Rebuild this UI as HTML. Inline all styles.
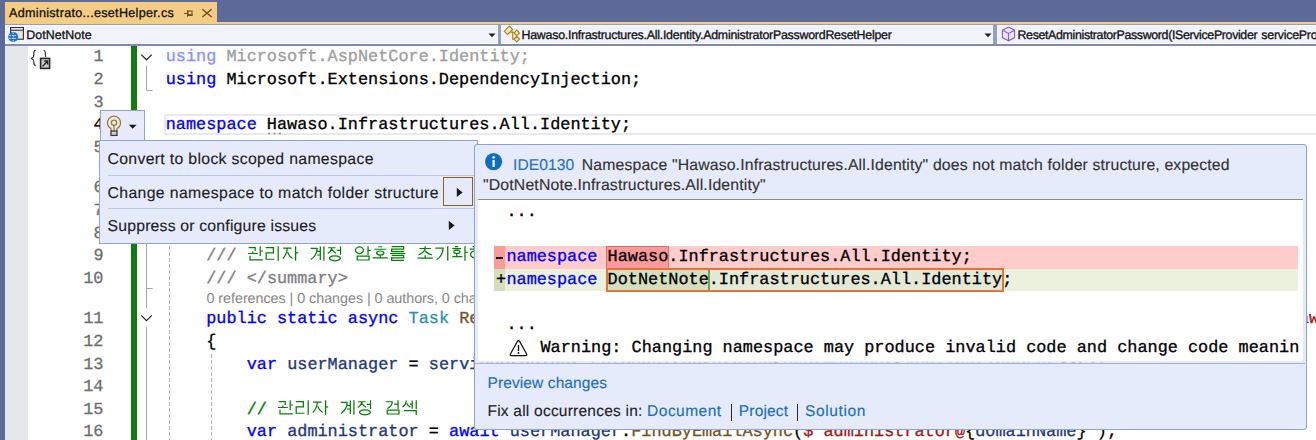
<!DOCTYPE html>
<html><head><meta charset="utf-8"><style>
*{margin:0;padding:0;box-sizing:border-box}
html,body{width:1316px;height:440px;overflow:hidden;background:#5d6b99;position:relative;text-rendering:geometricPrecision}
.a{position:absolute}
.m{position:absolute;font-family:"Liberation Mono",monospace;font-size:16.864px;line-height:normal;white-space:pre;-webkit-text-stroke:0.3px currentColor}
.s{position:absolute;font-family:"Liberation Sans",sans-serif;line-height:normal;white-space:pre;-webkit-text-stroke:0.15px currentColor}
.ko{position:absolute;overflow:visible}
</style></head><body>
<div class="a" style="left:5px;top:2px;width:212px;height:22px;background:#f5cc84"></div>
<div class="a" style="left:5px;top:22px;width:1311px;height:2px;background:#f5cc84"></div>
<div class="s" style="left:9.00px;top:6.20px;font-size:12.6px;color:#111111;letter-spacing:0.296px;-webkit-text-stroke:0.3px #111">Administrato...esetHelper.cs</div>
<svg class="a" style="left:182px;top:8px" width="14" height="12" viewBox="0 0 14 12"><g fill="none" stroke="#6b4a1e" stroke-width="1"><path d="M2 5.4H5.6 M5.6 2.2V8.8"/><rect x="6" y="3" width="4" height="4.4"/></g><rect x="5.6" y="6.2" width="4.9" height="1.6" fill="#6b4a1e"/></svg>
<svg class="a" style="left:201px;top:8px" width="12" height="10" viewBox="0 0 12 10"><path d="M1.4 1.2L10.6 9 M10.6 1.2L1.4 9" stroke="#6b4a1e" stroke-width="1.3" fill="none"/></svg>
<div class="a" style="left:5px;top:24px;width:1311px;height:22px;background:#909fcb"></div>
<div class="a" style="left:5px;top:24px;width:1311px;height:1px;background:#98a0b6"></div>
<div class="a" style="left:5px;top:44px;width:1311px;height:2px;background:#808cab"></div>
<div class="a" style="left:5px;top:25px;width:493px;height:19px;background:#f0f3fb;border:1px solid #f6f8fd;border-bottom-color:#fafbfe"></div>
<div class="a" style="left:501px;top:25px;width:492px;height:19px;background:#f0f3fb;border:1px solid #f6f8fd;border-bottom-color:#fafbfe"></div>
<div class="a" style="left:997px;top:25px;width:330px;height:19px;background:#f0f3fb;border:1px solid #f6f8fd;border-bottom-color:#fafbfe"></div>
<svg class="a" style="left:488px;top:33px" width="8" height="5"><path d="M0.5 0.5H7.5L4 4.2Z" fill="#1e1e1e"/></svg>
<svg class="a" style="left:984px;top:33px" width="8" height="5"><path d="M0.5 0.5H7.5L4 4.2Z" fill="#1e1e1e"/></svg>
<svg class="a" style="left:8px;top:26px" width="18" height="17" viewBox="0 0 18 17"><rect x="2.6" y="1.6" width="12.8" height="11.6" fill="#e4e6ec" stroke="#2d2d2d" stroke-width="1.1"/><rect x="2.6" y="1.6" width="12.8" height="2.6" fill="#fff" stroke="#2d2d2d" stroke-width="1.1"/><circle cx="5.2" cy="11" r="5" fill="#1e72c8"/><path d="M1.2 9.6H9.2 M1.2 12.4H9.2 M5.2 6.4V15.6" stroke="#fff" stroke-width="0.9" stroke-dasharray="1.4 1.2"/></svg>
<div class="s" style="left:26.20px;top:27.78px;font-size:12.4px;color:#111111;letter-spacing:0.089px;-webkit-text-stroke:0.3px #111">DotNetNote</div>
<svg class="a" style="left:503px;top:25px" width="19" height="19" viewBox="0 0 19 19"><path d="M7.2 7.2H11 M9.7 7.2V14.1H11" stroke="#b8860b" stroke-width="1.2" fill="none"/><g fill="#e6e4de" stroke="#b8860b" stroke-width="1.2" stroke-linejoin="miter"><path d="M1.2 6.3L6.3 1.2 9.7 4.4 4.6 9.5Z"/><path d="M13.8 5.2L16.5 7.9 13.8 10.6 11.1 7.9Z"/><path d="M13.8 11.4L16.5 14.1 13.8 16.8 11.1 14.1Z"/></g></svg>
<div class="s" style="left:521.50px;top:27.78px;font-size:12.4px;color:#111111;letter-spacing:-0.246px;-webkit-text-stroke:0.3px #111">Hawaso.Infrastructures.All.Identity.AdministratorPasswordResetHelper</div>
<svg class="a" style="left:1001px;top:26px" width="15" height="16" viewBox="0 0 15 16"><path d="M7.5 1L13.6 4.2V11.6L7.5 14.8 1.4 11.6V4.2Z" fill="#e9e4f3" stroke="#8e5fc0" stroke-width="1.1"/><path d="M1.4 4.2L7.5 7.4 13.6 4.2 M7.5 7.4V14.8" fill="none" stroke="#8e5fc0" stroke-width="1.1"/></svg>
<div class="s" style="left:1017.50px;top:27.78px;font-size:12.4px;color:#111111;letter-spacing:-0.35px;-webkit-text-stroke:0.3px #111">ResetAdministratorPassword(IServiceProvider</div>
<div class="s" style="left:1261.30px;top:27.78px;font-size:12.4px;color:#111111;letter-spacing:-0.246px;-webkit-text-stroke:0.3px #111">serviceProvider, string domainName)</div>
<div class="a" style="left:5px;top:46px;width:1311px;height:394px;background:#ffffff"></div>
<div class="a" style="left:5px;top:46px;width:23px;height:394px;background:#e6e7e9"></div>
<div class="a" style="left:164px;top:114px;width:1160px;height:21px;border:2px solid #e8e8ef;border-right:none"></div>
<div class="a" style="left:131px;top:46px;width:6px;height:394px;background:#107c10"></div>
<svg class="a" style="left:29px;top:48px" width="24" height="24" viewBox="0 0 24 24"><path d="M6.6 2.2C4.6 2.4 4.8 4 4.8 6.2S4.6 9.6 2.8 10 4.8 11 4.8 13.4 4.6 17.2 6.6 17.6" fill="none" stroke="#2b2b2b" stroke-width="1.1"/><path d="M14.6 2.2C16.4 2.4 16.4 4 16.4 6.2S16.8 8.6 17 9" fill="none" stroke="#2b2b2b" stroke-width="1.1"/><rect x="11.6" y="10.4" width="9" height="10" fill="#c9c9c9" stroke="#262626" stroke-width="1.6"/><path d="M13.6 18.4L18.4 13.2 M15.2 13H18.6V16.4" fill="none" stroke="#262626" stroke-width="1.4"/></svg>
<div class="m" style="left:93.38px;top:48.45px"><span style="color:#6e6e6e">1</span></div>
<div class="m" style="left:93.38px;top:71.05px"><span style="color:#6e6e6e">2</span></div>
<div class="m" style="left:93.38px;top:93.65px"><span style="color:#6e6e6e">3</span></div>
<div class="m" style="left:93.38px;top:116.25px"><span style="color:#000000">4</span></div>
<div class="m" style="left:93.38px;top:138.85px"><span style="color:#6e6e6e">5</span></div>
<div class="m" style="left:93.38px;top:179.45px"><span style="color:#6e6e6e">6</span></div>
<div class="m" style="left:93.38px;top:202.05px"><span style="color:#6e6e6e">7</span></div>
<div class="m" style="left:93.38px;top:224.65px"><span style="color:#6e6e6e">8</span></div>
<div class="m" style="left:93.38px;top:247.25px"><span style="color:#6e6e6e">9</span></div>
<div class="m" style="left:83.26px;top:269.85px"><span style="color:#6e6e6e">10</span></div>
<div class="m" style="left:83.26px;top:310.45px"><span style="color:#6e6e6e">11</span></div>
<div class="m" style="left:83.26px;top:333.05px"><span style="color:#6e6e6e">12</span></div>
<div class="m" style="left:83.26px;top:355.65px"><span style="color:#6e6e6e">13</span></div>
<div class="m" style="left:83.26px;top:378.25px"><span style="color:#6e6e6e">14</span></div>
<div class="m" style="left:83.26px;top:400.85px"><span style="color:#6e6e6e">15</span></div>
<div class="m" style="left:83.26px;top:423.45px"><span style="color:#6e6e6e">16</span></div>
<svg class="a" style="left:0;top:0" width="1316" height="440"><path d="M141.2 54.6L146.5 59.8 151.8 54.6" fill="none" stroke="#2b2b2b" stroke-width="1.3"/><path d="M146.5 66V90.5H152.5" fill="none" stroke="#a5a5a5" stroke-width="1"/><path d="M146.5 200V288.5H152.5" fill="none" stroke="#a5a5a5" stroke-width="1"/><path d="M146.5 240V308" fill="none" stroke="#a5a5a5" stroke-width="1"/><path d="M141.2 315.4L146.5 320.6 151.8 315.4" fill="none" stroke="#2b2b2b" stroke-width="1.3"/><path d="M146.5 327V440" fill="none" stroke="#a5a5a5" stroke-width="1"/><path d="M169.5 222V440" fill="none" stroke="#b4b4b4" stroke-width="1" stroke-dasharray="4 2"/><path d="M211.5 354V440" fill="none" stroke="#b4b4b4" stroke-width="1" stroke-dasharray="4 2"/></svg>
<div class="m" style="left:165.70px;top:48.45px"><span style="color:#8f8fff">using</span><span style="color:#9e9e9e"> Microsoft.AspNetCore.Identity;</span></div>
<div class="m" style="left:165.70px;top:71.05px"><span style="color:#0000ff">using</span><span style="color:#000000"> Microsoft.Extensions.DependencyInjection;</span></div>
<div class="m" style="left:165.70px;top:116.25px"><span style="color:#0000ff">namespace</span><span style="color:#000000"> Hawaso.Infrastructures.All.Identity;</span></div>
<div class="m" style="left:165.70px;top:179.45px"><span style="color:#0000ff">public static class</span><span style="color:#000000"> </span><span style="color:#2b91af">AdministratorPasswordResetHelper</span></div>
<div class="m" style="left:165.70px;top:202.05px"><span style="color:#000000">{</span></div>
<div class="m" style="left:206.18px;top:224.65px"><span style="color:#808080">/// &lt;summary&gt;</span></div>
<div class="m" style="left:206.18px;top:247.25px"><span style="color:#808080">///</span></div>
<div class="m" style="left:206.18px;top:269.85px"><span style="color:#808080">/// &lt;/summary&gt;</span></div>
<div class="m" style="left:206.18px;top:310.45px"><span style="color:#0000ff">public static async</span><span style="color:#000000"> </span><span style="color:#2b91af">Task</span><span style="color:#000000"> </span><span style="color:#74531f">ResetAdministratorPassword</span><span style="color:#000000">(</span><span style="color:#2b91af">IServiceProvider</span><span style="color:#000000"> </span><span style="color:#1f377f">serviceProvider</span><span style="color:#000000">, </span><span style="color:#0000ff">string</span><span style="color:#000000"> </span><span style="color:#1f377f">domainName</span><span style="color:#000000"> = </span><span style="color:#a31515">&quot;hawaso.com&quot;</span><span style="color:#000000">)</span></div>
<div class="m" style="left:206.18px;top:333.05px"><span style="color:#000000">{</span></div>
<div class="m" style="left:246.66px;top:355.65px"><span style="color:#0000ff">var</span><span style="color:#000000"> </span><span style="color:#1f377f">userManager</span><span style="color:#000000"> = </span><span style="color:#1f377f">serviceProvider</span><span style="color:#000000">.</span><span style="color:#74531f">GetRequiredService</span><span style="color:#000000">&lt;</span><span style="color:#2b91af">UserManager</span><span style="color:#000000">&lt;</span><span style="color:#2b91af">ApplicationUser</span><span style="color:#000000">&gt;&gt;();</span></div>
<div class="m" style="left:246.66px;top:400.85px"><span style="color:#008000">//</span></div>
<div class="m" style="left:246.66px;top:423.45px"><span style="color:#0000ff">var</span><span style="color:#000000"> </span><span style="color:#1f377f">administrator</span><span style="color:#000000"> = </span><span style="color:#0000ff">await</span><span style="color:#000000"> </span><span style="color:#1f377f">userManager</span><span style="color:#000000">.</span><span style="color:#74531f">FindByEmailAsync</span><span style="color:#000000">(</span><span style="color:#a31515">$&quot;administrator@</span><span style="color:#000000">{</span><span style="color:#1f377f">domainName</span><span style="color:#000000">}</span><span style="color:#a31515">&quot;</span><span style="color:#000000">);</span></div>
<svg class="a" style="left:266px;top:131px" width="18" height="5"><g fill="#8a8a8a"><circle cx="3" cy="2.5" r="1"/><circle cx="8.5" cy="2.5" r="1"/><circle cx="14" cy="2.5" r="1"/></g></svg>
<svg class="ko" style="left:246.66px;top:246.40px" width="241" height="18" viewBox="0 0 241 18"><g fill="none" stroke="#008000" stroke-width="1.25" stroke-linecap="butt" transform="scale(1 0.96)"><path transform="translate(0.60 0)" d="M1 1.6H7.6V5.2 M5.2 5.6V7.6 M0.4 7.8H10.2 M12.6 0.2V10.4 M12.6 5.2H15.6 M2.4 10.2V14.4H15.2"/><path transform="translate(18.00 0)" d="M0.8 1.6H8.4V7.2H1.2V13.8H9.4 M13.2 0.2V15.4"/><path transform="translate(35.40 0)" d="M0.6 2.2H9.2 M5 2.4C4.6 7 2.6 10.8 0.4 13.2 M5.2 6.4C6.2 9.4 8 11.6 10.2 13 M13.2 0.2V15.4 M13.2 7.2H15.8"/><path transform="translate(62.92 0)" d="M0.8 2.4H7.2C7.2 7.6 5 11.4 1 14 M7 5.6H10.2 M7 9.4H10.2 M10.4 0.6V14.6 M14 0.2V15.4"/><path transform="translate(80.32 0)" d="M0.8 1.8H8.2 M4.6 2C4.2 4.6 2.6 6.6 0.4 7.8 M4.8 3.6C5.6 5.6 7 6.8 8.8 7.6 M13.2 0.2V9.4 M9.4 4.6H13.2 M7.6 10.2A5.4 2.6 0 1 0 7.61 10.2Z"/><path transform="translate(107.84 0)" d="M4.6 0.9A3.9 3.5 0 1 0 4.61 0.9Z M13.2 0.2V9.4 M13.2 4.6H15.8 M2.4 10.6H14.2V14.6H2.4Z"/><path transform="translate(125.24 0)" d="M6 0.8H10 M2 3.4H14 M8 5.2A3.6 2.1 0 1 0 8.01 5.2Z M8 9.4V11.8 M0.4 12.4H15.6"/><path transform="translate(142.64 0)" d="M2 0.6H14V3.2H2V5.8H14.4 M0.4 7.8H15.6 M2 9.8H14V12.4H2V15H14.4"/><path transform="translate(170.16 0)" d="M8 0.2V2 M2.2 2.6H13.8 M8 3C7 5.8 4.6 8 1.4 9.2 M8 4.8C9.2 7 11.6 8.4 14.6 9.2 M8 9.6V12 M0.4 12.6H15.6"/><path transform="translate(187.56 0)" d="M0.8 2.2H8.6C8.6 7.6 6.4 11.4 2 14.2 M13.2 0.2V15.4"/><path transform="translate(204.96 0)" d="M3 0.6H6.2 M0.4 2.8H9.2 M4.8 4.2A3 1.9 0 1 0 4.81 4.2Z M4.8 8.6V10.6 M0.4 11H10.4 M13 0.2V15.4 M13 6.6H15.8"/><path transform="translate(222.36 0)" d="M3.2 0.6H7 M0.4 3.2H10 M5.2 5.4A4 3.4 0 1 0 5.21 5.4Z M13 0.2V15.4 M13 7.2H15.8"/></g></svg>
<svg class="ko" style="left:277.02px;top:400.00px" width="144" height="18" viewBox="0 0 144 18"><g fill="none" stroke="#008000" stroke-width="1.25" stroke-linecap="butt" transform="scale(1 0.96)"><path transform="translate(0.60 0)" d="M1 1.6H7.6V5.2 M5.2 5.6V7.6 M0.4 7.8H10.2 M12.6 0.2V10.4 M12.6 5.2H15.6 M2.4 10.2V14.4H15.2"/><path transform="translate(18.00 0)" d="M0.8 1.6H8.4V7.2H1.2V13.8H9.4 M13.2 0.2V15.4"/><path transform="translate(35.40 0)" d="M0.6 2.2H9.2 M5 2.4C4.6 7 2.6 10.8 0.4 13.2 M5.2 6.4C6.2 9.4 8 11.6 10.2 13 M13.2 0.2V15.4 M13.2 7.2H15.8"/><path transform="translate(62.92 0)" d="M0.8 2.4H7.2C7.2 7.6 5 11.4 1 14 M7 5.6H10.2 M7 9.4H10.2 M10.4 0.6V14.6 M14 0.2V15.4"/><path transform="translate(80.32 0)" d="M0.8 1.8H8.2 M4.6 2C4.2 4.6 2.6 6.6 0.4 7.8 M4.8 3.6C5.6 5.6 7 6.8 8.8 7.6 M13.2 0.2V9.4 M9.4 4.6H13.2 M7.6 10.2A5.4 2.6 0 1 0 7.61 10.2Z"/><path transform="translate(107.84 0)" d="M0.8 1.8H7.4C7.4 5 6 7.2 2.4 8.8 M13.2 0.2V9.4 M9.4 4.4H13.2 M2.4 10.6H14.2V14.6H2.4Z"/><path transform="translate(125.24 0)" d="M4.2 0.6C3.8 3.6 2.4 6 0.4 7.6 M4.4 3.4C5.2 5.2 6.4 6.6 8.2 7.6 M10 0.4V9 M14 0.2V9.6 M7.6 4.4H10 M1.6 11H14V15.6"/></g></svg>
<div class="s" style="left:206.50px;top:290.87px;font-size:14.4px;color:#878787;letter-spacing:-0.067px;-webkit-text-stroke:0">0 references | 0 changes | 0 authors, 0 changes</div>
<div class="a" style="left:100px;top:110px;width:45px;height:31px;background:#e7ebfb;border:1px solid #8fa3cc"></div>
<svg class="a" style="left:104px;top:112.8px" width="20" height="26" viewBox="0 0 20 26"><path d="M7.4 17.8L6.9 15.6A6.6 6.6 0 1 1 13.1 15.6L12.6 17.8" fill="none" stroke="#a47b1c" stroke-width="1.3"/><circle cx="10" cy="9.8" r="2.6" fill="none" stroke="#a47b1c" stroke-width="1.3"/><path d="M10 12.4V17.6" stroke="#a47b1c" stroke-width="1.3"/><rect x="7" y="18" width="6" height="4.4" fill="#d0d0d0" stroke="#3c3c3c" stroke-width="1.3"/></svg>
<svg class="a" style="left:128px;top:124px" width="10" height="6"><path d="M0.8 0.8H8.6L4.7 4.8Z" fill="#1a1a1a"/></svg>
<div class="a" style="left:99px;top:140px;width:379px;height:104px;background:#e6ebfc;border:1px solid #8fa3cc"></div>
<div class="a" style="left:108px;top:175px;width:366px;height:1px;background:#b9c6e6"></div>
<div class="a" style="left:108px;top:208px;width:366px;height:1px;background:#b9c6e6"></div>
<div class="s" style="left:107.50px;top:150.70px;font-size:15.8px;color:#1e1e1e;letter-spacing:0.325px">Convert to block scoped namespace</div>
<div class="s" style="left:107.50px;top:184.70px;font-size:15.8px;color:#1e1e1e;letter-spacing:0.363px">Change namespace to match folder structure</div>
<div class="s" style="left:107.50px;top:217.70px;font-size:15.8px;color:#1e1e1e;letter-spacing:0.185px">Suppress or configure issues</div>
<div class="a" style="left:443px;top:177px;width:30px;height:29px;border:1px solid #8a6414"></div>
<svg class="a" style="left:456px;top:187px" width="8" height="11"><path d="M0.8 0.8L6.6 5.4 0.8 10Z" fill="#1a1a1a"/></svg>
<svg class="a" style="left:448px;top:220px" width="8" height="11"><path d="M0.8 0.8L6.6 5.4 0.8 10Z" fill="#1a1a1a"/></svg>
<div class="a" style="left:474px;top:144px;width:833px;height:286px;background:#e6ebfc;border:1px solid #8fa3cc;border-radius:3px"></div>
<svg class="a" style="left:484px;top:152px" width="20" height="20" viewBox="0 0 20 20"><circle cx="9.6" cy="9.6" r="8.6" fill="#0e6fc1"/><rect x="8.5" y="8" width="2.2" height="7" fill="#fff"/><circle cx="9.6" cy="5.4" r="1.3" fill="#fff"/></svg>
<div class="s" style="left:513.00px;top:157.08px;font-size:15.6px;color:#1f72c0;letter-spacing:0.083px">IDE0130</div>
<div class="s" style="left:581.70px;top:156.90px;font-size:15.8px;color:#333333;letter-spacing:0.151px">Namespace "Hawaso.Infrastructures.All.Identity" does not match folder structure, expected</div>
<div class="s" style="left:483.00px;top:176.70px;font-size:15.8px;color:#333333;letter-spacing:0.158px">"DotNetNote.Infrastructures.All.Identity"</div>
<div class="a" style="left:478px;top:199px;width:825px;height:162px;background:#ffffff;border-top:1px solid #8c8c8c"></div>
<div class="m" style="left:506.40px;top:203.25px"><span style="color:#000000">...</span></div>
<div class="a" style="left:494px;top:246.2px;width:804px;height:22.6px;background:#ffcccc"></div>
<div class="a" style="left:494px;top:246.2px;width:11px;height:22.6px;background:#fa9b9b"></div>
<div class="a" style="left:494px;top:268.8px;width:804px;height:22.6px;background:#ebf1dd"></div>
<div class="a" style="left:494px;top:268.8px;width:11px;height:22.6px;background:#d3dfbe"></div>
<div class="a" style="left:606.4px;top:246.2px;width:63.1px;height:22.6px;background:#fa9a9a;border:1.5px solid #ee6a6a"></div>
<div class="a" style="left:606.4px;top:268.0px;width:397.6px;height:24.4px;background:#e4e9d6;border:2px solid #e3733b"></div>
<div class="a" style="left:608.4px;top:270.0px;width:101.9px;height:20.4px;background:#d5dfbe;border-right:2.5px solid #7f9a57"></div>
<div class="a" style="left:496px;top:257.3px;width:7px;height:1.5px;background:#000"></div>
<div class="m" style="left:496.00px;top:271.05px"><span style="color:#000000">+</span></div>
<div class="m" style="left:506.40px;top:248.45px"><span style="color:#0000ff">namespace</span><span style="color:#000000"> Hawaso.Infrastructures.All.Identity;</span></div>
<div class="m" style="left:506.40px;top:271.05px"><span style="color:#0000ff">namespace</span><span style="color:#000000"> DotNetNote.Infrastructures.All.Identity;</span></div>
<div class="m" style="left:506.40px;top:316.25px"><span style="color:#000000">...</span></div>
<svg class="a" style="left:508px;top:339px" width="21" height="19" viewBox="0 0 21 19"><path d="M9.4 2.4Q10.5 0.8 11.6 2.4L18.6 15Q19.2 16.6 17.6 16.6H3.4Q1.8 16.6 2.4 15Z" fill="none" stroke="#111" stroke-width="1.2" stroke-linejoin="round"/><path d="M10.5 6V12" stroke="#111" stroke-width="1.4"/><circle cx="10.5" cy="14" r="0.95" fill="#111"/></svg>
<div class="a" style="left:478px;top:199px;width:821px;height:162px;overflow:hidden"><div class="m" style="left:62.50px;top:139.85px"><span style="color:#000000">Warning: Changing namespace may produce invalid code and change code meaning</span></div>
</div>
<div class="a" style="left:478px;top:362px;width:825px;height:2px;overflow:hidden;opacity:0.2"><div class="m" style="left:-231.34px;top:-6.35px"><span style="color:#0000ff">var</span><span style="color:#000000"> </span><span style="color:#1f377f">userManager</span><span style="color:#000000"> = </span><span style="color:#1f377f">serviceProvider</span><span style="color:#000000">.</span><span style="color:#74531f">GetRequiredService</span><span style="color:#000000">&lt;</span><span style="color:#2b91af">UserManager</span><span style="color:#000000">&lt;</span><span style="color:#2b91af">ApplicationUser</span><span style="color:#000000">&gt;&gt;();</span></div>
</div>
<div class="a" style="left:475px;top:363px;width:830px;height:1px;background:#a3b1d6"></div>
<div class="s" style="left:487.50px;top:375.27px;font-size:15.5px;color:#1a6ec0;letter-spacing:0.107px">Preview changes</div>
<div class="s" style="left:487.50px;top:403.27px;font-size:15.5px;color:#1e1e1e;letter-spacing:0.223px">Fix all occurrences in:</div>
<div class="s" style="left:647.10px;top:403.27px;font-size:15.5px;color:#1a6ec0;letter-spacing:0.486px">Document</div>
<div class="a" style="left:730.5px;top:404px;width:1px;height:17px;background:#2a2a2a"></div>
<div class="s" style="left:738.80px;top:403.27px;font-size:15.5px;color:#1a6ec0;letter-spacing:0.167px">Project</div>
<div class="a" style="left:797px;top:404px;width:1px;height:17px;background:#2a2a2a"></div>
<div class="s" style="left:805.00px;top:403.27px;font-size:15.5px;color:#1a6ec0;letter-spacing:0.629px">Solution</div>
</body></html>
